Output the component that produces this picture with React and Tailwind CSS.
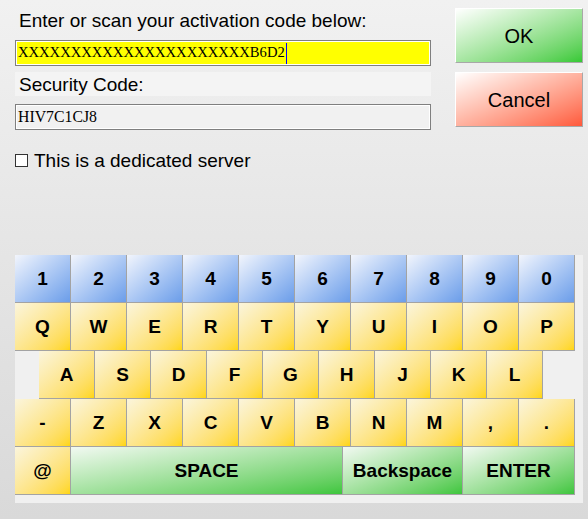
import React from 'react';

const sans = { fontFamily: '"Liberation Sans", Arial, sans-serif' };
const serif = { fontFamily: '"Liberation Serif", "Times New Roman", serif' };

const blue = 'bg-linear-to-br from-[#f2f5fc] to-[#6b9de9]';
const yellow = 'bg-linear-to-br from-[#fbf5dc] to-[#ffd600]';
const green = 'bg-linear-to-br from-[#f2f9f2] to-[#3cc63c]';

const rows = [
  { offset: false, keys: ['1', '2', '3', '4', '5', '6', '7', '8', '9', '0'], color: blue },
  { offset: false, keys: ['Q', 'W', 'E', 'R', 'T', 'Y', 'U', 'I', 'O', 'P'], color: yellow },
  { offset: true, keys: ['A', 'S', 'D', 'F', 'G', 'H', 'J', 'K', 'L'], color: yellow },
  { offset: false, keys: ['-', 'Z', 'X', 'C', 'V', 'B', 'N', 'M', ',', '.'], color: yellow },
];

function Key({ label, color, width = 'w-[56px]' }) {
  return (
    <div
      className={`${width} h-[48px] shrink-0 ${color} border-r border-b border-[#a3a3a3] flex items-center justify-center pt-[2px] text-[19px] font-bold text-black`}
    >
      {label}
    </div>
  );
}

export default function App() {
  return (
    <div
      className="w-[588px] h-[519px] overflow-hidden bg-linear-to-b from-[#f1f1f1] to-[#d9d9d9] text-black"
      style={sans}
    >
      <div className="h-[255px] flex pt-[6px]">
        {/* left column: codes */}
        <div className="ml-[15px] w-[416px] flex flex-col">
          <div className="h-[28px] flex items-center pl-[4px] text-[19px] leading-none">
            Enter or scan your activation code below:
          </div>
          <div className="mt-[6px] h-[26px] border border-[#7f7f7f] bg-[#ffff00] shadow-[inset_0_0_0_1px_#fff] flex items-center pl-[2px] text-[14.6px]" style={serif}>
            <span>XXXXXXXXXXXXXXXXXXXXXXB6D2</span>
            <span className="ml-[1px] w-[1px] h-[21px] bg-[#0000ff]" />
          </div>
          <div className="mt-[6px] h-[24px] flex items-center pl-[4px] bg-[#f4f4f4] text-[19px] leading-none">
            Security Code:
          </div>
          <div className="mt-[8px] h-[26px] border border-[#7f7f7f] bg-[#f1f1f1] shadow-[inset_0_0_0_1px_#fff] flex items-center pl-[2px] text-[15.8px]" style={serif}>
            HIV7C1CJ8
          </div>
          <div className="mt-[20px] h-[20px] flex items-center">
            <span className="w-[13px] h-[13px] border border-[#333] bg-white shrink-0" />
            <span className="ml-[6px] text-[19px] leading-none">This is a dedicated server</span>
          </div>
        </div>

        {/* right column: buttons */}
        <div className="ml-[24px] w-[128px] mt-[2px] flex flex-col gap-[9px]">
          <button className="h-[55px] bg-linear-to-br from-[#ffffff] to-[#33c933] border border-white border-r-[#a8a8a8] border-b-[#a8a8a8] text-[20px]">
            OK
          </button>
          <button className="h-[55px] bg-linear-to-br from-[#ffffff] to-[#ff583a] border border-white border-r-[#a8a8a8] border-b-[#a8a8a8] text-[20px]">
            Cancel
          </button>
        </div>
      </div>

      {/* on-screen keyboard */}
      <div className="ml-[15px] w-[568px] h-[248px] bg-[#f0f0f0]">
        {rows.map((row, i) => (
          <div key={i} className={`flex ${row.offset ? 'pl-[24px]' : ''}`}>
            {row.keys.map((k) => (
              <Key key={k} label={k} color={row.color} />
            ))}
          </div>
        ))}
        <div className="flex">
          <Key label="@" color={yellow} />
          <Key label="SPACE" color={green} width="w-[272px]" />
          <Key label="Backspace" color={green} width="w-[120px]" />
          <Key label="ENTER" color={green} width="w-[112px]" />
        </div>
      </div>
    </div>
  );
}
